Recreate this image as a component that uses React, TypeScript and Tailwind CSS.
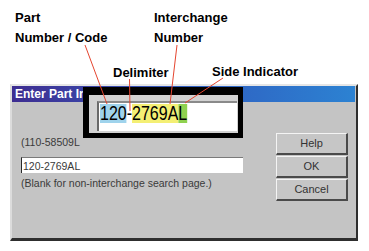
import React from 'react';

const SANS = { fontFamily: '"Liberation Sans", Arial, sans-serif' };

function Label({ className, children }: { className: string; children: React.ReactNode }) {
  return (
    <div className={`absolute whitespace-nowrap text-[13px] font-bold leading-none text-black ${className}`}>
      {children}
    </div>
  );
}

function DialogButton({ label }: { label: string }) {
  return (
    <div className="flex h-[22px] w-[72px] items-center justify-center border-t border-l border-t-[#f4f4f4] border-l-[#f4f4f4] border-r-2 border-b-2 border-r-[#4a4a4a] border-b-[#4a4a4a] bg-[#c6c6c6] text-[11px] text-[#333]">
      {label}
    </div>
  );
}

export default function App() {
  return (
    <div className="relative h-[251px] w-[369px] overflow-hidden bg-white pt-[84px] pl-[10px]" style={SANS}>
      {/* dialog */}
      <div className="flex h-[157px] w-[348px] flex-col border-t-2 border-l-2 border-t-[#e6e6e6] border-l-[#dcdcdc] border-r-2 border-b-[3px] border-r-[#2e2e2e] border-b-[#2e2e2e] bg-[#c4c4c4]">
        <div className="mr-[1px] flex h-[16px] items-center bg-linear-to-r from-[#3d2d91] via-[#2f5cbf] to-[#2c82d2] pl-[3px] text-[12px] font-bold text-white">
          Enter Part Information
        </div>
        <div className="flex flex-1">
          <div className="flex flex-1 flex-col pl-[9px] pt-[34px] text-[10.5px] leading-[12px] text-[#3a3a3a]">
            <div>(110-58509L</div>
            <div className="mt-[9px] flex h-[16px] w-[222px] items-center border-t border-l border-t-[#7a7a7a] border-l-[#2a2a2a] bg-white pl-[1px] text-[10.5px]">
              120-2769AL
            </div>
            <div className="mt-[4px]">(Blank for non-interchange search page.)</div>
          </div>
          <div className="flex flex-col gap-[1px] pt-[31px] pr-[8px]">
            <DialogButton label="Help" />
            <DialogButton label="OK" />
            <DialogButton label="Cancel" />
          </div>
        </div>
      </div>

      {/* callout box */}
      <div className="absolute top-[87px] left-[83px] h-[51px] w-[160px] bg-black pt-[8px] pr-[5px] pb-[5px] pl-[6px]">
        <div className="h-full w-full bg-[#d2d2d2] pt-[6px] pr-[1px] pb-[2px] pl-[8px]">
          <div className="h-full border-t-2 border-l-2 border-t-[#8a8a8a] border-l-[#6a6a6a] bg-white pt-[1px] pl-[1px]">
            <div className="flex origin-left scale-x-[0.8] whitespace-nowrap text-[20px] leading-[19px] text-black">
              <span className="bg-[#9fd3ec]">120</span>
              <span>-</span>
              <span className="bg-[#f4ef74]">2769A</span>
              <span className="bg-[#8fd14f]">L</span>
            </div>
          </div>
        </div>
      </div>

      {/* annotation labels */}
      <Label className="top-[11px] left-[15px]">Part</Label>
      <Label className="top-[31px] left-[15px]">Number / Code</Label>
      <Label className="top-[11px] left-[154px]">Interchange</Label>
      <Label className="top-[31px] left-[154px]">Number</Label>
      <Label className="top-[66px] left-[113px]">Delimiter</Label>
      <Label className="top-[65px] left-[212px]">Side Indicator</Label>

      {/* leader lines */}
      <svg className="pointer-events-none absolute inset-0" width="369" height="251" viewBox="0 0 369 251">
        <g stroke="#e5452f" strokeWidth="1" fill="none">
          <line x1="85" y1="45" x2="107" y2="104" />
          <line x1="129.5" y1="79" x2="130" y2="111" />
          <line x1="177" y1="45" x2="170" y2="104" />
          <line x1="223" y1="78" x2="185" y2="103" />
        </g>
      </svg>
    </div>
  );
}
